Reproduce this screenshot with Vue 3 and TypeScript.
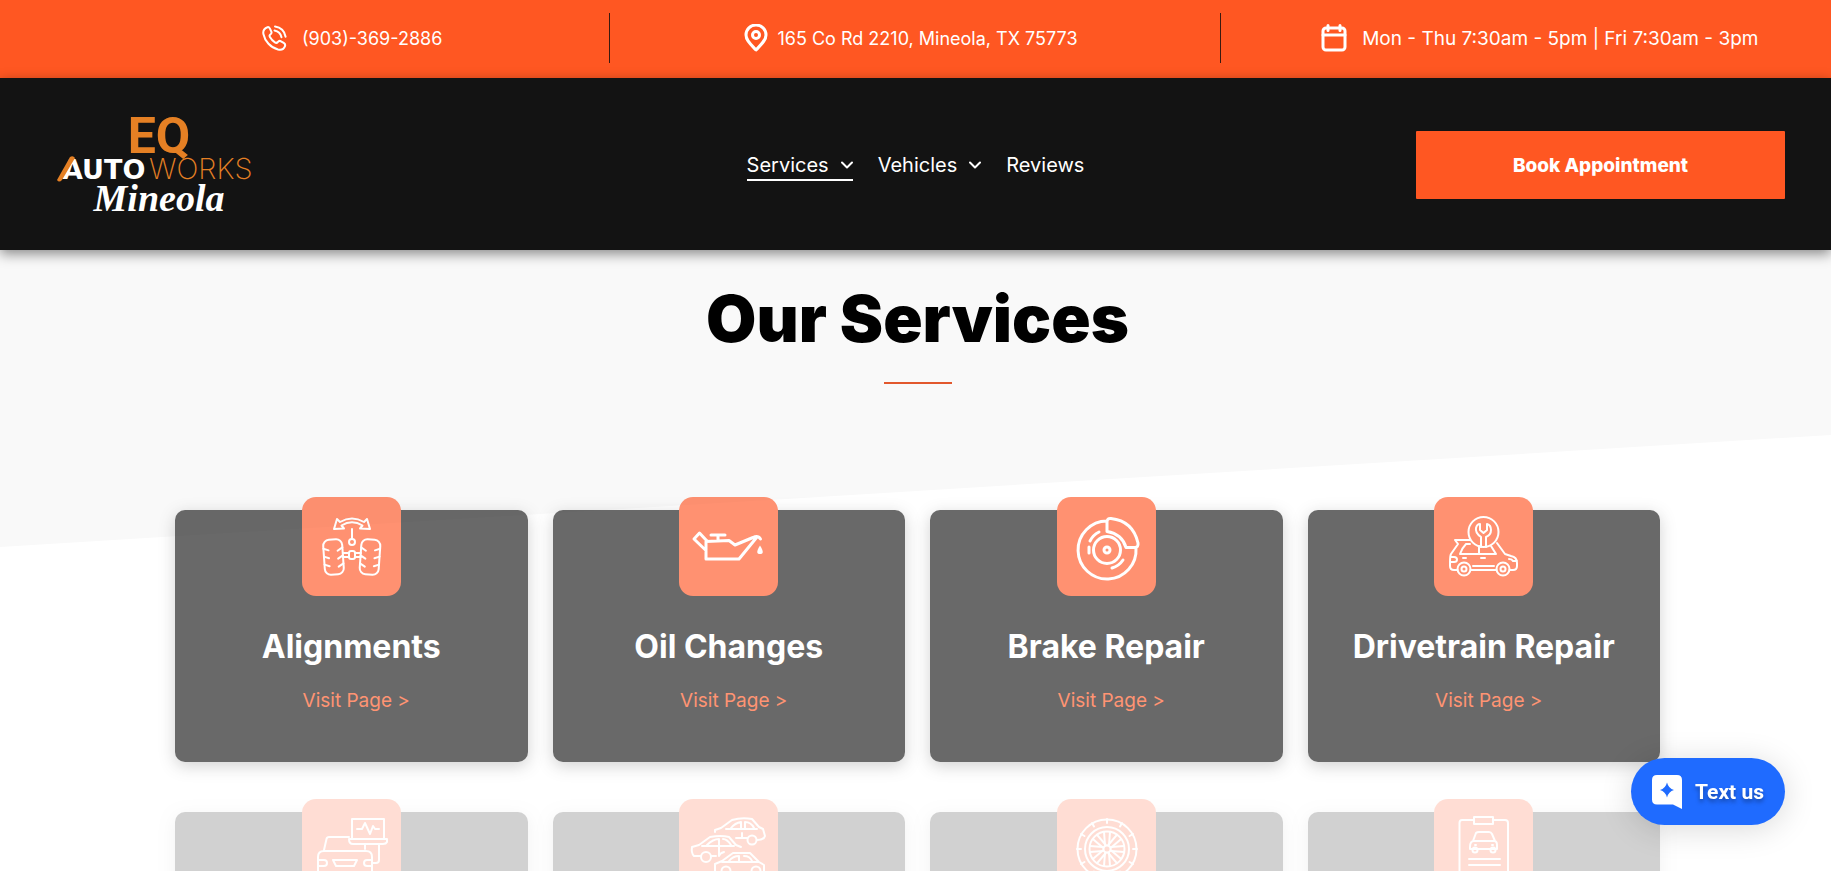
<script setup lang="ts">
interface Service {
  icon: string
  title?: string
}

const featured: Service[] = [
  { icon: 'alignment', title: 'Alignments' },
  { icon: 'oil', title: 'Oil Changes' },
  { icon: 'brake', title: 'Brake Repair' },
  { icon: 'drivetrain', title: 'Drivetrain Repair' },
]

const upcoming: Service[] = [
  { icon: 'diagnostics' },
  { icon: 'fleet' },
  { icon: 'wheel' },
  { icon: 'inspection' },
]

const rows = [
  { name: 'featured', items: featured },
  { name: 'upcoming', items: upcoming },
]

const spokes = [0, 45, 90, 135, 180, 225, 270, 315]
const treads = [0, 30, 60, 90, 120, 150, 180, 210, 240, 270, 300, 330]
</script>

<template>
  <div class="page">
    <div class="topbar">
      <div class="contact phone">
        <svg width="26" height="26" viewBox="0 0 26 26" class="line">
          <path d="M6.5 2.2C3.6 3.2 1.8 5.6 2.4 9c1.400 7.200 7.300 13.600 14.600 15.500 3.400.8 6-.6 7-3.300.5-1.500 0-2.500-1.300-3.300l-2.700-1.600c-1.300-.8-2.300-.5-3.200.7-.9 1.100-1.800 1.100-2.900.4-2-1.300-3.800-3.200-5-5.300-.6-1.100-.5-1.900.4-2.600 1.200-.9 1.600-1.900.9-3.200L8.800 3.400C8.200 2.300 7.500 1.900 6.500 2.200Z" />
          <path d="M13.500 5.500c3.600.6 6.300 3.300 7 6.800M14 1.500c5.600.8 9.600 4.800 10.600 10.300" />
        </svg>
        <a href="#phone">(903)-369-2886</a>
      </div>
      <div class="contact address">
        <svg width="24" height="28" viewBox="0 0 24 28" class="line bold">
          <path d="M12 26C7 20.500 2 16.500 2 11a10 10 0 0 1 20 0c0 5.500-5 9.500-10 15Z" />
          <circle cx="12" cy="11" r="3.500" />
        </svg>
        <a href="#map">165 Co Rd 2210, Mineola, TX 75773</a>
      </div>
      <div class="contact hours">
        <svg width="26" height="28" viewBox="0 0 26 28" class="line bold">
          <rect x="2" y="4" width="22" height="22" rx="3" />
          <path d="M2 11h22M7 1.500v5M19 1.500v5" />
        </svg>
        <span>Mon - Thu 7:30am - 5pm | Fri 7:30am - 3pm</span>
      </div>
    </div>

    <header class="header">
      <a class="logo" href="#home">
        <svg width="206" height="132" viewBox="0 -14 206 132">
          <text class="mark" x="103" y="40">EQ</text>
          <text class="auto" x="6" y="66">AUTO</text>
          <path class="slash" d="M1 67 14 44Q17 42 19 45L6 67Q3 70 1 67Z" />
          <text class="works" x="93" y="66">WORKS</text>
          <text class="town" x="103" y="98">Mineola</text>
        </svg>
      </a>
      <nav class="nav">
        <a class="current" href="#services">Services
          <svg width="12" height="8" viewBox="0 0 12 8"><path d="m1 1.500 5 5 5-5" /></svg>
        </a>
        <a href="#vehicles">Vehicles
          <svg width="12" height="8" viewBox="0 0 12 8"><path d="m1 1.500 5 5 5-5" /></svg>
        </a>
        <a href="#reviews">Reviews</a>
      </nav>
      <button class="book" type="button">Book Appointment</button>
    </header>

    <main class="services">
      <h1>Our Services</h1>
      <hr class="rule" />
      <div v-for="row in rows" :key="row.name" class="row" :class="row.name">
        <article v-for="service in row.items" :key="service.icon" class="card">
          <div class="tile">
            <svg viewBox="0 0 99 99" :class="service.icon">
              <template v-if="service.icon === 'alignment'">
                <path d="M35 22 32 32 42 31.500 39.500 28.500Q50 22 60.500 28.500L58 31.500 68 32 65 22 62 25Q50 18 38 25ZM50 32v10" />
                <circle cx="50" cy="45" r="3" />
                <g transform="rotate(-4 31.500 60)">
                  <rect x="22" y="42.500" width="19" height="35" rx="6" />
                  <path d="M22 51l5 2M22 59l5 2M22 67l5 2M41 51l-5 3M41 59l-5 3M41 67l-5 3" />
                </g>
                <g transform="rotate(4 68 60)">
                  <rect x="58.500" y="42.500" width="19" height="35" rx="6" />
                  <path d="M77.500 51l-5 2M77.500 59l-5 2M77.500 67l-5 2M58.500 51l5 3M58.500 59l5 3M58.500 67l5 3" />
                </g>
                <rect x="47" y="54" width="6" height="8" rx="2" />
                <path d="M41 56h6M41 60h6M53 56h6M53 60h6" />
              </template>
              <template v-else-if="service.icon === 'oil'">
                <path d="M27 62V44.500L50 43.500 56 48 74 40.500Q79 38 81.500 42M78 40 60 62H27M27 53.500 15 42 20.500 36 28 44M32 38h14M39 38v6" />
                <path class="solid" d="M81 48.500Q75.500 57 81 57T81 48.500Z" />
              </template>
              <template v-else-if="service.icon === 'brake'">
                <path d="M50 24A29 29 0 1 0 79 51M50 34.500V25Q50 21 54 21.500 76 24 81 46 81.500 50.500 78 50.500H69Q65 37 50 34.500ZM33 44q3-6 9-9M32 50v6M55 71q7-2 11-8" />
                <circle cx="50" cy="53" r="13.500" />
                <circle cx="50" cy="53" r="3" />
              </template>
              <template v-else-if="service.icon === 'drivetrain'">
                <circle cx="49.500" cy="35" r="15" />
                <path d="M47 50V40Q41 36 42 31 43 27 46 27V33L49.500 36 53 33V27Q57 28 57 33 57 38 52 40V50" />
                <path d="M36 43H21L24 47 17 57Q16 59 16 65V69Q16 73 20 73H23.500M36.500 73H62.500M75.500 73H79Q83 73 83 69V66Q83 60 77 59L71 57 63 46M36 47H32Q28 51 26 57H62L57 49M45 49V57M39 69H60M17 60H20Q23 60 23 62.500T20 65H16M29 61h3M47 61h4M83 64H79Q78 62 75 62" />
                <circle cx="30" cy="72" r="6.500" /><circle cx="30" cy="72" r="2.500" />
                <circle cx="69" cy="72" r="6.500" /><circle cx="69" cy="72" r="2.500" />
              </template>
              <template v-else-if="service.icon === 'diagnostics'">
                <path d="M50 40V20H82V40M47 40H85V43Q84 45 81 45H51Q47 45 47 40ZM55 30h5l3-6 5 11 3-8 2 3h4" />
                <path d="M47 38H27Q25 38 24.500 40L22 51M63 45v5M77 45V61Q77 64 74 64H71M16 80V58Q16 52 22 52H64Q70 52 70 58V80M31 61H55L52 67H34ZM16 61H22Q25 61 25 64T22 67H16M70 61H65Q62 61 62 64T65 67H70" />
              </template>
              <template v-else-if="service.icon === 'fleet'">
                <path d="M36 33V31L42 29 53 21Q63 18 73 20L80 28 84 30 86 37Q85 41 78 41M57 39H68M47 30H78M52 29Q56 24 62 23V30M66 23V29M66 23Q72 23 75 29M63 34V39" />
                <circle cx="73" cy="41" r="4.500" />
                <path d="M22 57H15Q12 54 13 48L20 46 31 38Q42 36 50 38L57 46 62 48M32 57H37M23 47H55M28 46Q34 40 40 40V47M44 40Q48 40 52 46M40 47V57M40 57Q41 54 45 53" />
                <circle cx="27" cy="58" r="5" />
                <path d="M36 76V65L43 62 54 54H71L80 63 85 66V76M43 63H79M50 62Q54 57 60 57V63M65 57Q71 57 73 62" />
                <circle cx="47" cy="72" r="4.500" /><circle cx="77" cy="72" r="4.500" />
              </template>
              <template v-else-if="service.icon === 'wheel'">
                <circle cx="50" cy="50" r="29.500" />
                <circle cx="50" cy="50" r="22" />
                <circle cx="50" cy="50" r="17.500" />
                <circle cx="50" cy="50" r="3.500" />
                <path v-for="angle in spokes" :key="angle" d="M48 46 47 33M52 46 53 33" :transform="`rotate(${angle} 50 50)`" />
                <path v-for="angle in treads" :key="`t${angle}`" d="M50 20v4" :transform="`rotate(${angle} 50 50)`" />
              </template>
              <template v-else>
                <path d="M39 21H28Q25.500 21 25.500 24V90H74V24Q74 21 71 21H60M41 18H59V25H40V18ZM35 60H66M35 66H66" />
                <path d="M39 42 42 34Q43 33 45 33H55Q57 33 58 35L61 42M36 48Q36 42 40 42H60Q63 42 63 46V50H36Z" />
                <circle cx="41" cy="51" r="2.500" /><circle cx="59" cy="51" r="2.500" />
                <path d="M41 46h1M58 46h1" />
              </template>
            </svg>
          </div>
          <h2 v-if="service.title">{{ service.title }}</h2>
          <a v-if="service.title" class="visit" href="#service">Visit Page &gt;</a>
        </article>
      </div>
    </main>

    <button class="chat" type="button">
      <svg width="30" height="34" viewBox="0 0 30 34">
        <path fill="#fff" d="M5 0H25Q30 0 30 5V34L21 29.500H5Q0 29.500 0 24.500V5Q0 0 5 0Z" />
        <path fill="#1f6bff" d="M15 7.500Q16.500 13.500 22 15 16.500 16.500 15 22.500 13.500 16.500 8 15 13.500 13.500 15 7.500Z" />
      </svg>
      Text us
    </button>
  </div>
</template>

<style>
html {
  scrollbar-width: none;
}
body {
  margin: 0;
  background: #fff;
}
</style>

<style scoped>
.page {
  font-family: Inter, "Liberation Sans", sans-serif;
  color: #fff;
}
a {
  color: inherit;
  text-decoration: none;
}
svg {
  display: block;
  flex: none;
  fill: none;
  stroke-linecap: round;
  stroke-linejoin: round;
}
.topbar {
  display: grid;
  grid-template-columns: 1fr 1fr 1fr;
  padding: 13px 0 15px;
  background: #ff5722;
  font-size: 18px;
}
.contact {
  display: flex;
  align-items: center;
  justify-content: center;
  height: 50px;
  box-sizing: border-box;
  border-right: 1px solid #3a1a10;
}
.phone {
  gap: 15px;
  padding-left: 94px;
}
.address {
  gap: 9px;
  padding-right: 8px;
}
.hours {
  gap: 15px;
  padding-left: 28px;
  border-right: 0;
  font-size: 19px;
}
.line {
  stroke: #fff;
  stroke-width: 2;
}
.line.bold {
  stroke-width: 3;
}
.header {
  position: relative;
  z-index: 1;
  display: grid;
  grid-template-columns: 1fr auto 1fr;
  align-items: center;
  height: 172px;
  box-sizing: border-box;
  padding: 2px 46px 0;
  background: #131313;
  box-shadow: 0 4px 12px rgba(0, 0, 0, 0.45);
}
.logo {
  justify-self: start;
  padding-left: 10px;
}
.mark {
  font: 700 50px Roboto, sans-serif;
  fill: #e58024;
  text-anchor: middle;
}
.auto {
  font: 700 27px "DejaVu Sans", sans-serif;
  fill: #fff;
}
.slash {
  fill: #e58024;
}
.works {
  font: 200 29px Inter, sans-serif;
  fill: #e58024;
}
.town {
  font: italic 700 38px "Liberation Serif", serif;
  fill: #fff;
  text-anchor: middle;
}
.nav {
  display: flex;
  gap: 25px;
  padding-top: 2px;
  font-size: 20px;
  line-height: 28px;
}
.nav a {
  display: flex;
  align-items: center;
  gap: 12px;
  border-bottom: 2px solid transparent;
}
.nav a.current {
  border-color: #fff;
}
.nav svg {
  stroke: #fff;
  stroke-width: 2;
}
.book {
  justify-self: end;
  width: 369px;
  height: 68px;
  border: 0;
  border-radius: 1px;
  background: #ff5722;
  color: #fff;
  font: 800 19px Inter, sans-serif;
}
.services {
  position: relative;
  padding: 31px 171px 0 175px;
}
.services::before {
  content: "";
  position: absolute;
  inset: 0 0 auto;
  height: 297px;
  background: #f9f9f9;
  clip-path: polygon(0 0, 100% 0, 100% 185px, 0 100%);
}
h1 {
  position: relative;
  margin: 0;
  color: #000;
  font-size: 65px;
  font-weight: 900;
  line-height: 76px;
  text-align: center;
}
.rule {
  position: relative;
  width: 68px;
  height: 2px;
  margin: 25px auto 126px;
  border: 0;
  background: #e2582d;
}
.row {
  position: relative;
  display: grid;
  grid-template-columns: repeat(4, 1fr);
  gap: 25px;
  margin-bottom: 50px;
}
.card {
  display: flex;
  flex-direction: column;
  align-items: center;
  height: 252px;
  border-radius: 10px;
  background: #131313;
  box-shadow: 0 4px 16px rgba(0, 0, 0, 0.28);
}
.featured .card {
  opacity: 0.63;
}
.upcoming .card {
  opacity: 0.19;
}
.row:last-child {
  margin-bottom: 0;
}
.tile {
  width: 99px;
  height: 99px;
  margin-top: -13px;
  border-radius: 14px;
  background: #ff5220;
}
.tile svg {
  stroke: #fff;
  stroke-width: 2;
}
.tile .oil,
.tile .brake {
  stroke-width: 3;
}
.tile .solid {
  fill: #fff;
  stroke: none;
}
h2 {
  margin: 31px 0 0;
  font-size: 32px;
  font-weight: 700;
  line-height: 40px;
}
.visit {
  margin-top: 20px;
  padding-left: 10px;
  color: #ff5722;
  font-size: 19px;
  line-height: 28px;
}
.chat {
  position: fixed;
  right: 46px;
  bottom: 46px;
  z-index: 2;
  display: flex;
  align-items: center;
  justify-content: center;
  gap: 13px;
  width: 154px;
  height: 67px;
  padding: 0;
  border: 0;
  border-radius: 34px;
  background: #1f6bff;
  box-shadow: 0 4px 32px rgba(0, 0, 0, 0.15);
  color: #fff;
  font: 700 21px Roboto, sans-serif;
  text-shadow: 0 3px 4px rgba(0, 0, 0, 0.35);
}
</style>
